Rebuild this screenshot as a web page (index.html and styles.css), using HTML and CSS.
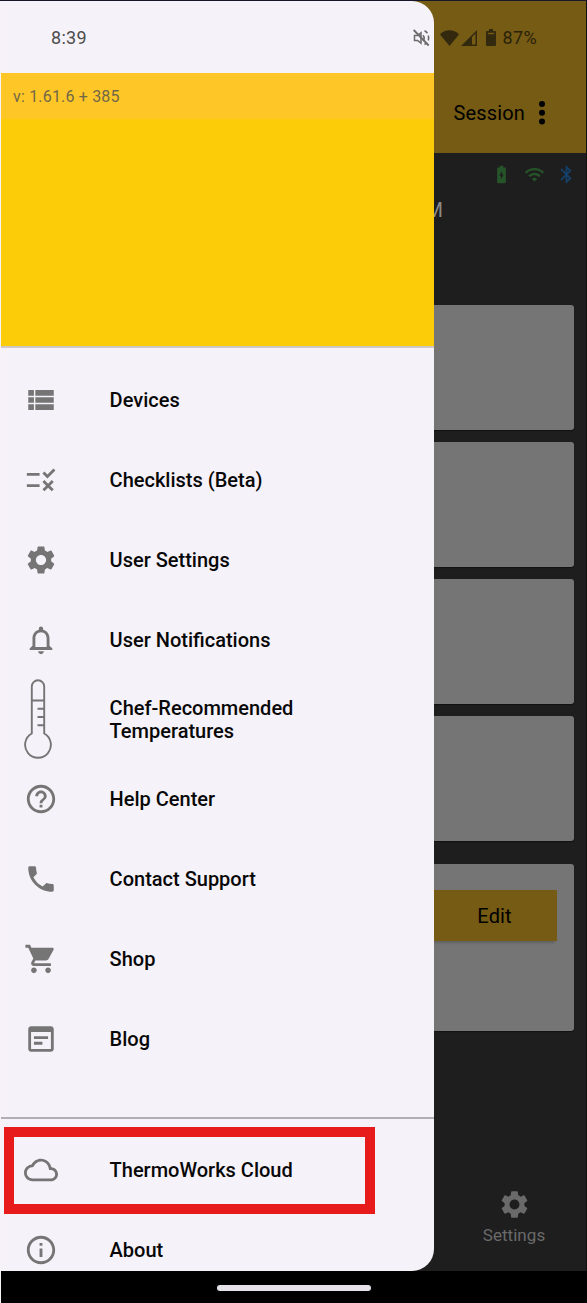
FILE: index.html
```
<!DOCTYPE html>
<html lang="en">
<head>
<meta charset="utf-8">
<title>ThermoWorks</title>
<link rel="stylesheet" href="styles.css">
</head>
<body>
<svg class="defs" width="0" height="0">
  <symbol id="gear" viewBox="0 0 24 24"><path d="M19.14 12.94c.04-.3.06-.61.06-.94 0-.32-.02-.64-.07-.94l2.03-1.58c.18-.14.23-.41.12-.61l-1.92-3.32c-.12-.22-.37-.29-.59-.22l-2.39.96c-.5-.38-1.03-.7-1.62-.94l-.36-2.54c-.04-.24-.24-.41-.48-.41h-3.84c-.24 0-.43.17-.47.41l-.36 2.54c-.59.24-1.13.57-1.62.94l-2.39-.96c-.22-.08-.47 0-.59.22L2.74 8.87c-.12.21-.08.47.12.61l2.03 1.58c-.05.3-.09.63-.09.94s.02.64.07.94l-2.03 1.58c-.18.14-.23.41-.12.61l1.92 3.32c.12.22.37.29.59.22l2.39-.96c.5.38 1.03.7 1.62.94l.36 2.54c.05.24.24.41.48.41h3.84c.24 0 .44-.17.47-.41l.36-2.54c.59-.24 1.13-.56 1.62-.94l2.39.96c.22.08.47 0 .59-.22l1.92-3.32c.12-.22.07-.47-.12-.61l-2.01-1.58zM12 15.6c-1.98 0-3.6-1.62-3.6-3.6s1.62-3.6 3.6-3.6 3.6 1.62 3.6 3.6-1.62 3.6-3.6 3.6z"/></symbol>
</svg>
<div class="screen">
  <div class="app">
    <header class="appbar">
      <div class="status">
        <svg class="st-wifi" viewBox="0 0 19 16"><path d="M0 4.600C2.600 1.500 6 .3 9.500 .3s6.900 1.200 9.500 4.300L9.500 16z"/></svg>
        <svg class="st-signal" viewBox="0 0 16 16"><path d="M16 0v16H0zM11 7v7.500h3.500V3.600z" fill-rule="evenodd"/></svg>
        <svg class="st-battery" viewBox="0 0 10 17"><path d="M3 0h4v2h2q1 0 1 1v13q0 1-1 1H1q-1 0-1-1V3q0-1 1-1h2zM1.800 3.700v1.600h6.400V3.700z" fill-rule="evenodd"/></svg>
        <span>87%</span>
      </div>
      <div class="actions">
        <span class="session">Session</span>
        <svg class="more" viewBox="0 0 6 24"><circle cx="3" cy="3" r="3"/><circle cx="3" cy="11.700" r="3"/><circle cx="3" cy="20.400" r="3"/></svg>
      </div>
    </header>
    <div class="device-icons">
      <svg class="green" viewBox="0 0 24 24"><path d="M15.670 4H14V2h-4v2H8.330C7.600 4 7 4.600 7 5.330v15.330C7 21.400 7.600 22 8.330 22h7.330c.74 0 1.340-.6 1.340-1.330V5.330C17 4.600 16.400 4 15.670 4zM11.300 17.500v-4H9.500L12.700 8v4h1.800z"/></svg>
      <svg class="green" viewBox="0 0 24 24"><path d="M1 9l2 2c4.970-4.970 13.030-4.970 18 0l2-2C16.930 2.930 7.080 2.930 1 9zm8 8l3 3 3-3c-1.650-1.660-4.340-1.660-6 0zm-4-4l2 2c2.760-2.760 7.240-2.760 10 0l2-2C15.140 9.140 8.870 9.140 5 13z"/></svg>
      <svg class="blue" viewBox="0 0 24 24"><path d="M17.710 7.710L12 2h-1v7.590L6.410 5 5 6.410 10.590 12 5 17.590 6.410 19 11 14.410V22h1l5.710-5.710-4.300-4.290 4.300-4.290zM13 5.830l1.880 1.880L13 9.590V5.830zm1.880 10.460L13 18.170v-3.760l1.880 1.880z"/></svg>
    </div>
    <div class="time-label">M</div>
    <div class="cards">
      <div class="card"></div>
      <div class="card"></div>
      <div class="card"></div>
      <div class="card"></div>
      <div class="card card-edit"><div class="edit">Edit</div></div>
    </div>
    <div class="tab">
      <svg class="tab-icon"><use href="#gear"/></svg>
      <span>Settings</span>
    </div>
  </div>

  <nav class="drawer">
    <div class="drawer-status">
      <span>8:39</span>
      <svg class="mute" viewBox="0 0 17 18"><path d="M1.500 6.500h3L8 3.800v10.400L4.500 11.500h-3z" fill="none" stroke-width="1.500"/><path d="M10 6.200q2.400 2.800 0 5.600M11.500 1.800q1.800.8 2.900 2.400M15.300 6.500q.7 2.500 0 5M13.800 13.500q-1 1.300-2.300 2" fill="none" stroke-width="1.600"/><path d="M.7 1l15 15.500" fill="none" stroke-width="1.900"/></svg>
    </div>
    <div class="version">v: 1.61.6 + 385</div>
    <div class="banner"></div>
    <div class="menu">
      <div class="item"><svg viewBox="0 0 24 24"><path d="M3 5h4v4H3zM8 5h13v4H8zM3 10h4v4H3zM8 10h13v4H8zM3 15h4v4H3zM8 15h13v4H8z"/></svg><span>Devices</span></div>
      <div class="item"><svg viewBox="0 0 24 24"><path d="M16.540 11L13 7.460l1.410-1.410 2.120 2.120 4.240-4.240 1.410 1.410L16.540 11zM11 7H2v2h9V7zm10 6.410L19.590 12 17 14.590 14.410 12 13 13.410 15.590 16 13 18.590 14.410 20 17 17.410 19.590 20 21 18.590 18.410 16 21 13.410zM11 15H2v2h9v-2z"/></svg><span>Checklists (Beta)</span></div>
      <div class="item"><svg><use href="#gear"/></svg><span>User Settings</span></div>
      <div class="item"><svg viewBox="0 0 24 24"><path d="M12 22c1.100 0 2-.9 2-2h-4c0 1.100.9 2 2 2zm6-6v-5c0-3.070-1.630-5.640-4.500-6.320V4c0-.83-.67-1.500-1.500-1.500s-1.500.67-1.500 1.500v.68C7.640 5.360 6 7.920 6 11v5l-2 2v1h16v-1l-2-2zm-2 1H8v-6c0-2.480 1.510-4.500 4-4.500s4 2.020 4 4.500v6z"/></svg><span>User Notifications</span></div>
      <div class="item"><svg class="thermo" viewBox="0 0 28 80"><path d="M7.800 54.500V7.500a6.200 6.200 0 0 1 12.400 0v47a12.900 12.900 0 1 1-12.400 0zM7.800 21.500h12.400M13.500 29.700h6.700M13.500 38h6.700M13.500 46.200h6.700"/></svg><span>Chef-Recommended<br>Temperatures</span></div>
      <div class="item"><svg viewBox="0 0 24 24"><path d="M11 18h2v-2h-2v2zm1-16C6.480 2 2 6.480 2 12s4.480 10 10 10 10-4.480 10-10S17.520 2 12 2zm0 18c-4.410 0-8-3.590-8-8s3.590-8 8-8 8 3.590 8 8-3.590 8-8 8zm0-14c-2.210 0-4 1.790-4 4h2c0-1.100.9-2 2-2s2 .9 2 2c0 2-3 1.750-3 5h2c0-2.250 3-2.500 3-5 0-2.210-1.790-4-4-4z"/></svg><span>Help Center</span></div>
      <div class="item"><svg viewBox="0 0 24 24"><path d="M20 15.510c-1.240 0-2.450-.2-3.570-.57-.35-.12-.75-.03-1.020.24l-2.200 2.200c-2.830-1.450-5.150-3.760-6.590-6.590l2.200-2.200c.28-.28.36-.67.25-1.020C8.700 6.450 8.500 5.250 8.500 4c0-.55-.45-1-1-1H4c-.55 0-1 .45-1 1 0 9.390 7.610 17 17 17 .55 0 1-.45 1-1v-3.490c0-.55-.45-1-1-1z"/></svg><span>Contact Support</span></div>
      <div class="item"><svg viewBox="0 0 24 24"><path d="M7 18c-1.100 0-1.990.9-1.990 2S5.900 22 7 22s2-.9 2-2-.9-2-2-2zM1 2v2h2l3.600 7.590-1.350 2.450c-.16.28-.25.61-.25.96 0 1.100.9 2 2 2h12v-2H7.420c-.14 0-.25-.11-.25-.25l.03-.12.9-1.630h7.450c.75 0 1.410-.41 1.750-1.030l3.580-6.490c.08-.14.12-.31.12-.48 0-.55-.45-1-1-1H5.210l-.94-2H1zm16 16c-1.100 0-1.990.9-1.990 2s.89 2 1.990 2 2-.9 2-2-.9-2-2-2z"/></svg><span>Shop</span></div>
      <div class="item"><svg viewBox="0 0 24 24"><path d="M19 3H5c-1.110 0-2 .9-2 2v14c0 1.100.89 2 2 2h14c1.100 0 2-.9 2-2V5c0-1.100-.89-2-2-2zm0 16H5V7h14v12zM7 10h10v2H7zM7 14h6v2H7z" fill-rule="evenodd"/></svg><span>Blog</span></div>
    </div>
    <div class="menu menu-bottom">
      <div class="item marked"><svg viewBox="0 0 24 24"><path d="M19.350 10.040C18.670 6.590 15.640 4 12 4 9.110 4 6.600 5.640 5.350 8.040 2.340 8.360 0 10.910 0 14c0 3.310 2.690 6 6 6h13c2.760 0 5-2.240 5-5 0-2.640-2.050-4.780-4.650-4.960zM19 18H6c-2.210 0-4-1.790-4-4 0-2.050 1.530-3.760 3.560-3.970l1.070-.11.5-.95C8.080 7.140 9.940 6 12 6c2.620 0 4.880 1.860 5.390 4.430l.3 1.500 1.530.11c1.560.1 2.780 1.410 2.780 2.960 0 1.650-1.350 3-3 3z"/></svg><span>ThermoWorks Cloud</span><div class="highlight"></div></div>
      <div class="item"><svg viewBox="0 0 24 24"><path d="M11 7h2v2h-2zm0 4h2v6h-2zm1-9C6.480 2 2 6.480 2 12s4.480 10 10 10 10-4.480 10-10S17.520 2 12 2zm0 18c-4.410 0-8-3.590-8-8s3.590-8 8-8 8 3.590 8 8-3.590 8-8 8z"/></svg><span>About</span></div>
    </div>
  </nav>
  <footer class="navbar"><div class="handle"></div></footer>
</div>
</body>
</html>
```
FILE: styles.css
```
* { box-sizing: border-box; }
body {
  margin: 0;
  background: #f7f3f8;
  font-family: Roboto, "Liberation Sans", sans-serif;
}
.defs { position: absolute; }
.screen {
  position: relative;
  width: 587px;
  height: 1303px;
  border-top: 1px solid #17172b;
  padding-left: 1px;
  overflow: hidden;
}
.app {
  height: 1270px;
  display: flex;
  flex-direction: column;
  background: #1e1e1e;
  border-right: 1px solid #101010;
}
.appbar { height: 152px; background: #755b14; }
.status {
  display: flex;
  align-items: center;
  justify-content: flex-end;
  height: 73px;
  padding-right: 49px;
  font-size: 18px;
  letter-spacing: .4px;
  color: #2b220b;
}
.status svg { fill: #33290f; }
.st-wifi { width: 19px; height: 16px; margin-right: 2px; }
.st-signal { width: 16px; height: 16px; margin-right: 9px; }
.st-battery { width: 10px; height: 17px; margin-right: 6px; }
.actions {
  display: flex;
  align-items: center;
  justify-content: flex-end;
  height: 78px;
  padding-right: 41px;
  color: #000;
}
.session { font-size: 20px; letter-spacing: .15px; }
.more { width: 6px; height: 24px; margin-left: 14px; }
.device-icons {
  display: flex;
  justify-content: flex-end;
  gap: 11.500px;
  padding: 10.500px 9px 0 0;
}
.device-icons svg { width: 21px; height: 21px; }
.green { fill: #265429; }
.blue { fill: #14416b; }
.time-label {
  height: 48.500px;
  padding: 13.500px 143px 0 0;
  text-align: right;
  font-size: 20px;
  line-height: 24px;
  color: #8a8a8a;
}
.cards {
  display: flex;
  flex-direction: column;
  gap: 12px;
  padding: 72px 12px 0 11px;
}
.card {
  height: 125px;
  border-radius: 3px;
  background: #757575;
  box-shadow: 0 1px 1px #111;
}
.card-edit {
  height: 167px;
  margin-top: 11px;
  padding: 26px 17px 0 0;
  display: flex;
  justify-content: flex-end;
}
.edit {
  width: 125px;
  height: 51px;
  line-height: 52px;
  text-align: center;
  font-size: 20px;
  letter-spacing: .1px;
  color: #000;
  background: #755b14;
  box-shadow: -2px 2px 2px #626262;
}
.tab {
  width: 144px;
  margin: auto 0 25px auto;
  display: flex;
  flex-direction: column;
  align-items: center;
  font-size: 17px;
  line-height: 22px;
  letter-spacing: .05px;
  color: #6a6a6a;
}
.tab-icon { width: 33px; height: 33px; margin-bottom: 3px; fill: #6a6a6a; }
.drawer {
  position: absolute;
  left: 1px;
  top: 0;
  width: 433px;
  height: 1270px;
  overflow: hidden;
  border-radius: 0 22px 22px 0;
  background: #f6f2f9;
}
.drawer-status {
  display: flex;
  align-items: center;
  justify-content: space-between;
  height: 72px;
  padding: 1px 4px 0 50px;
  font-size: 18px;
  letter-spacing: .3px;
  color: #4c4c4c;
}
.mute { width: 17px; height: 18px; stroke: #6b6b6b; }
.version {
  height: 46px;
  padding-left: 12px;
  background: #ffc627;
  color: #716847;
  font-size: 16px;
  line-height: 47px;
  letter-spacing: .18px;
}
.banner { height: 227px; background: #fdcc08; }
.menu {
  border-top: 2px solid #cfc8c5;
  padding: 12.500px 0 37.500px;
}
.menu-bottom { border-top-color: #b1aeb5; padding-top: 11.500px; }
.item {
  display: flex;
  align-items: center;
  height: 79.890px;
  padding-left: 23px;
  font-size: 20px;
  font-weight: 500;
  line-height: 23px;
  color: #080808;
}
.item svg { width: 34px; height: 34px; margin: -1px 51.600px 0 0; fill: #757575; flex: none; }
.item .thermo {
  width: 28px;
  height: 80px;
  margin: -1px 57.600px 0 0;
  fill: none;
  stroke: #757575;
  stroke-width: 1.900;
}
.marked { position: relative; }
.highlight {
  position: absolute;
  left: 3px;
  top: -3.500px;
  width: 371px;
  height: 87px;
  border: 10px solid #e71b1c;
}
.navbar {
  display: flex;
  justify-content: center;
  height: 32px;
  padding-top: 14px;
  background: #000;
}
.handle { width: 154px; height: 6px; border-radius: 3px; background: #e6e2e9; }
```
